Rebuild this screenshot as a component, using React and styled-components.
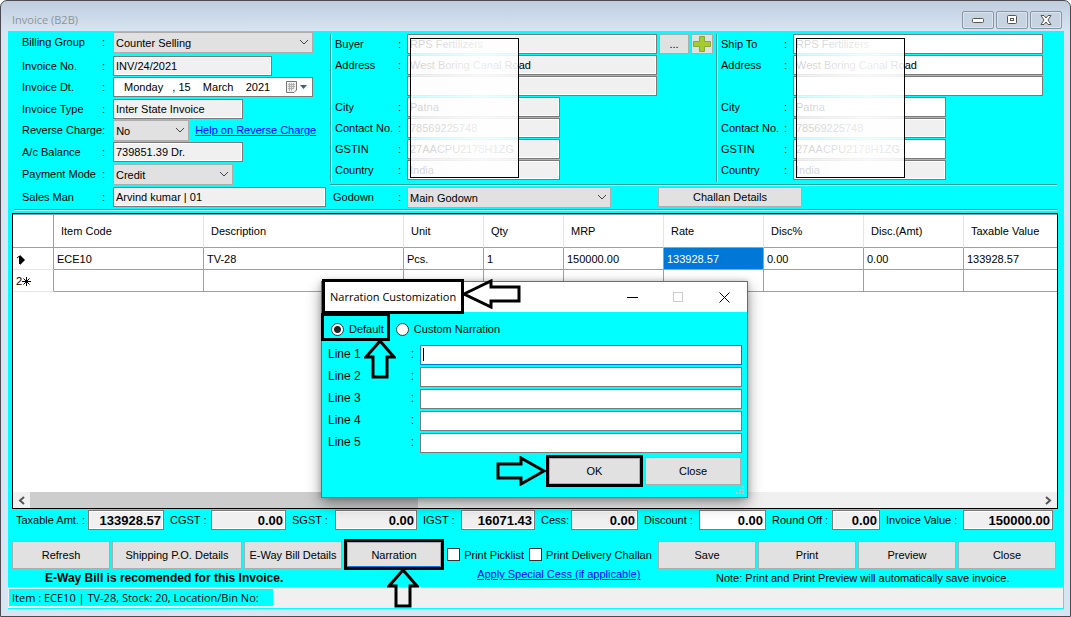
import React from "react";
import styled, { createGlobalStyle, css } from "styled-components";

const Global = createGlobalStyle`
  * { box-sizing: border-box; }
  body { margin: 0; font: 11px/14px "Liberation Sans", Arial, sans-serif; color: #000; }
  button, input, select { font: inherit; color: inherit; margin: 0; border-radius: 0; }
`;

const uiFont = css`font-family: "Open Sans", "Noto Sans", sans-serif;`;

/* ---------- main window ---------- */

const Window = styled.div`
  position: relative;
  display: flex;
  flex-direction: column;
  min-height: 100vh;
  min-width: 1040px;
  padding: 0 6px 7px 7px;
  border: 1px solid #4a4a52;
  border-radius: 7px 7px 0 0;
  background: linear-gradient(#c0cddc, #d7e4f2 30px);
  overflow: hidden;
`;

const TitleBar = styled.header`
  display: flex;
  align-items: center;
  height: 30px;
  padding: 7px 2px 0 4px;
`;

const WindowTitle = styled.h1`
  flex: 1;
  margin: 0;
  font-size: 11px;
  font-weight: 400;
  color: #8d949c;
  ${uiFont}
`;

const CaptionButton = styled.button`
  display: grid;
  place-items: center;
  width: 32px;
  height: 18px;
  margin-left: 2px;
  padding: 0;
  border: 1px solid #8a94a4;
  border-radius: 2px;
  background: #c6d3e1;
  box-shadow: inset 0 0 0 1px #dbe5f0;
`;

const Body = styled.main`
  display: flex;
  flex: 1;
  flex-direction: column;
  background: #0ff;
`;

/* ---------- form ---------- */

const Form = styled.form`
  display: flex;
  padding-top: 1px;
`;

const HeaderFields = styled.section`
  width: 322px;
  padding-left: 14px;
`;

const RightSide = styled.div`
  flex: 1;
  padding-right: 7px;
`;

const Parties = styled.div`
  display: flex;
  height: 153px;
  padding: 2px 0;
  border-bottom: 1px solid #3a9ea0;
  box-shadow: 0 1px #b8ffff;
`;

const Party = styled.section`
  position: relative;
  flex: ${(p) => (p.$grow ? "1" : "0 0 386px")};
  padding-left: 4px;
  border-left: 1px solid #3a9ea0;
  box-shadow: inset 1px 0 #b8ffff;
`;

const Row = styled.div`
  display: flex;
  gap: 2px;
  height: ${(p) => p.$h || 21}px;
`;

const Caption = styled.label`
  display: flex;
  flex: 0 0 ${(p) => p.$w || 74}px;
  justify-content: space-between;
  align-self: flex-start;
  padding: 3px ${(p) => p.$gap || 6}px 0 0;
  white-space: nowrap;
`;

const TextBox = styled.input`
  width: ${(p) => (p.$w ? p.$w + "px" : "100%")};
  height: 20px;
  padding: 0 2px;
  border: 1px solid #7a7a7a;
  outline: 0;
  background: ${(p) => (p.$white ? "#fff" : "#f0f0f0")};
  box-shadow: inset 0 0 0 1px #fff;
`;

const SelectBox = styled.span`
  position: relative;
  flex: 0 0 ${(p) => p.$w}px;
  height: 21px;
  select {
    appearance: none;
    width: 100%;
    height: 21px;
    padding: 0 20px 0 2px;
    border: 1px solid #adadad;
    background: #e1e1e1;
  }
  svg { position: absolute; right: 4px; top: 7px; pointer-events: none; }
`;

const DateBox = styled.span`
  display: flex;
  align-items: center;
  width: 200px;
  height: 20px;
  border: 1px solid #7a7a7a;
  background: #fff;
  input { flex: 1; min-width: 0; padding: 0 0 0 10px; border: 0; outline: 0; background: none; }
  button { display: flex; align-items: center; gap: 2px; padding: 0 4px 0 0; border: 0; background: none; }
`;

const Link = styled.a`
  color: #00f;
  text-decoration: underline;
  white-space: nowrap;
`;

const HelpLink = styled(Link)`
  padding: 3px 0 0 4px;
`;

const Redaction = styled.div`
  position: absolute;
  left: 79px;
  top: 4px;
  width: 109px;
  height: 140px;
  border: 1px solid #000;
  background:
    linear-gradient(90deg, transparent 5%, rgba(255, 255, 255, 0.6) 65%, rgba(255, 255, 255, 0.3)),
    rgba(255, 255, 255, 0.82);
`;

const Button = styled.button`
  width: ${(p) => (p.$w ? p.$w + "px" : "auto")};
  height: ${(p) => p.$h || 28}px;
  padding: 0;
  border: 1px solid #adadad;
  background: #e1e1e1;
  white-space: nowrap;
`;

const IconButton = styled(Button)`
  display: grid;
  place-items: center;
`;

const GodownRow = styled.div`
  display: flex;
  padding: 2px 0 0 3px;
`;

const ChallanButton = styled(Button)`
  margin-left: 47px;
`;

const Divider = styled.hr`
  margin: 0 7px 2px 6px;
  border: 0;
  border-top: 1px solid #3a9ea0;
  border-bottom: 1px solid #b8ffff;
`;

/* ---------- item grid ---------- */

const GridFrame = styled.section`
  display: flex;
  flex: 1;
  flex-direction: column;
  margin: 0 6px 0 4px;
  border: 1px solid #000;
  background: #fff;
  overflow: hidden;
`;

const TableArea = styled.div`
  flex: 1;
  border-top: 1px solid #a0a0a0;
  overflow: hidden;
`;

const Table = styled.table`
  width: 1051px;
  min-width: 100%;
  table-layout: fixed;
  border-collapse: separate;
  border-spacing: 0;
  th, td {
    height: 22px;
    padding: 0 3px;
    border-right: 1px solid #a0a0a0;
    border-bottom: 1px solid #a0a0a0;
    font-weight: 400;
    text-align: left;
    white-space: nowrap;
  }
  thead th { height: 33px; padding-left: 7px; border-right-color: #e5e5e5; }
  tr > th:first-child { border-right-color: #a0a0a0; }
  tbody th { border-bottom-color: #e5e5e5; }
  svg { vertical-align: middle; }
`;

const Selected = styled.td`
  background: #0078d7;
  color: #fff;
`;

const ScrollBar = styled.div`
  display: flex;
  align-items: center;
  height: 16px;
  background: #f0f0f0;
`;

const ScrollButton = styled.button`
  display: grid;
  place-items: center;
  width: 17px;
  height: 16px;
  padding: 0;
  border: 0;
  background: none;
`;

const ScrollTrack = styled.div`
  display: grid;
  flex: 1;
  grid-template-columns: 5fr 8fr;
  height: 16px;
  &::before { content: ""; background: #cdcdcd; }
`;

/* ---------- totals, actions, status ---------- */

const Totals = styled.section`
  display: grid;
  grid-template-columns:
    78px 76fr 47px 75fr 49px 82fr 44px 74fr 36px 67fr 61px 67fr 66px 48fr 83px 90fr;
  align-items: center;
  padding: 1px 11px 9px 2px;
  label { padding-left: 6px; white-space: nowrap; }
  input { padding: 0 2px; font-size: 13px; font-weight: 700; text-align: right; }
`;

const Actions = styled.section`
  display: flex;
  justify-content: space-between;
  padding: 0 8px 0 4px;
`;

const ActionGroup = styled.div`
  display: flex;
  flex-direction: column;
`;

const ButtonRow = styled.div`
  display: flex;
  align-items: center;
  gap: 2px;
  height: 31px;
`;

const Marked = styled.div`
  position: relative;
  border: 3px solid #000;
  button { display: block; }
`;

const FocusedButton = styled(Button)`
  border-bottom-color: #0078d7;
`;

const Check = styled.label`
  display: flex;
  align-items: center;
  gap: 4px;
  padding-right: 3px;
  white-space: nowrap;
  input { appearance: none; width: 13px; height: 13px; border: 1px solid #333; background: #fff; }
`;

const Notice = styled.p`
  margin: 0;
  padding-left: ${(p) => p.$indent}px;
  line-height: 17px;
  white-space: nowrap;
`;

const StrongNotice = styled(Notice)`
  font-size: 12px;
  font-weight: 700;
`;

const CessLink = styled(Link)`
  padding-left: 30px;
  line-height: 9px;
`;

const StatusBar = styled.footer`
  height: 22px;
  padding: 2px 0 0 1px;
  border: solid #0ff;
  border-width: 0 1px 1px 0;
  background: #f0f0f0;
  box-shadow: inset 0 1px #d7d7d7;
`;

const StatusText = styled.span`
  display: inline-block;
  min-width: 264px;
  padding: 0 7px 0 3px;
  line-height: 17px;
  background: #0ff;
  white-space: nowrap;
  ${uiFont}
`;

/* ---------- narration dialog ---------- */

const Dialog = styled.section`
  position: absolute;
  left: 320px;
  top: 280px;
  width: 427px;
  border: 1px solid #6b6b6b;
  background: #0ff;
  box-shadow: 0 6px 14px rgba(0, 0, 0, 0.4), 0 0 5px rgba(0, 0, 0, 0.2);
`;

const DialogTitle = styled.header`
  display: flex;
  align-items: center;
  height: 30px;
  padding-left: 8px;
  background: #fff;
  h2 { flex: 1; margin: 0; font-size: 11px; font-weight: 400; ${uiFont} }
  button { display: grid; place-items: center; width: 46px; height: 30px; padding: 0; border: 0; background: none; }
`;

const Choices = styled.div`
  display: flex;
  gap: 12px;
  padding: 10px 0 9px 9px;
  label { display: flex; align-items: center; gap: 5px; }
  input {
    appearance: none;
    width: 13px;
    height: 13px;
    border: 1px solid #333;
    border-radius: 50%;
    background: #fff;
  }
  input:checked { background: radial-gradient(#222 0 3px, #fff 4px); }
`;

const LineRow = styled.div`
  display: flex;
  height: 22px;
  padding: 0 5px 0 6px;
  font-size: 12px;
  label { display: flex; flex: 0 0 92px; justify-content: space-between; padding: 2px 6px 0 0; }
  input { background: #fff; }
  input:focus {
    border-color: #0078d7;
    caret-color: transparent;
    background: linear-gradient(#000, #000) 2px 2px / 1px 13px no-repeat #fff;
  }
`;

const DialogButtons = styled.div`
  display: flex;
  justify-content: flex-end;
  align-items: center;
  gap: 2px;
  padding: 0 6px 10px 0;
`;

const OutlineBox = styled.span`
  position: absolute;
  left: ${(p) => p.$x}px;
  top: ${(p) => p.$y}px;
  width: ${(p) => p.$w}px;
  height: ${(p) => p.$h}px;
  border: 3px solid #000;
  pointer-events: none;
`;

const Pointer = styled.svg`
  position: absolute;
  left: ${(p) => p.$x}px;
  top: ${(p) => p.$y}px;
  fill: none;
  stroke: #000;
  stroke-width: 3;
  pointer-events: none;
`;

const Grip = styled.svg`
  position: absolute;
  right: 2px;
  bottom: 2px;
  fill: #b8c4c4;
`;

const POINTERS = {
  left: { w: 60, h: 30, d: "M2 15 L29 2 V8 H57 V22 H29 V28 Z" },
  right: { w: 50, h: 30, d: "M48 15 L25 2 V8 H2 V22 H25 V28 Z" },
  up: { w: 32, h: 40, d: "M16 2 L30 18 H23 V38 H9 V18 H2 Z" },
};

function Arrow({ dir, x, y }) {
  const a = POINTERS[dir];
  return (
    <Pointer $x={x} $y={y} width={a.w} height={a.h} viewBox={`0 0 ${a.w} ${a.h}`} aria-hidden="true">
      <path d={a.d} />
    </Pointer>
  );
}

function Select({ id, w, value }) {
  return (
    <SelectBox $w={w}>
      <select id={id} defaultValue={value}>
        <option>{value}</option>
      </select>
      <svg width="10" height="7" viewBox="0 0 10 7" fill="none" stroke="#444">
        <path d="M1 1 L5 5 L9 1" />
      </svg>
    </SelectBox>
  );
}

function Field({ id, label, w = 89, h = 22, gap, children }) {
  return (
    <Row $h={h}>
      <Caption htmlFor={id} $w={w} $gap={gap}>
        <span>{label}</span>
        {label && <span>:</span>}
      </Caption>
      {children}
    </Row>
  );
}

function PartyPanel({ id, title, editable, grow, children }) {
  const rows = [
    [title, "RPS Fertilizers", 250, editable],
    ["Address", "West Boring Canal Road", 250, editable],
    ["", "", 250, editable],
    ["City", "Patna", 153, editable],
    ["Contact No.", "78569225748", 153, false],
    ["GSTIN", "27AACPU2178H1ZG", 153, editable],
    ["Country", "India", 153, false],
  ];
  return (
    <Party $grow={grow}>
      {rows.map(([label, value, w, white], i) => (
        <Field key={i} id={`${id}-${i}`} label={label} w={70} h={21} gap={4}>
          <TextBox
            id={`${id}-${i}`}
            aria-label={label || "Address line 2"}
            defaultValue={value}
            $w={w}
            $white={white}
            readOnly={!white}
          />
          {i === 0 && children}
        </Field>
      ))}
      <Redaction />
    </Party>
  );
}

const COLUMNS = [
  ["Item Code", 150], ["Description", 200], ["Unit", 80], ["Qty", 80], ["MRP", 100],
  ["Rate", 100], ["Disc%", 100], ["Disc.(Amt)", 100], ["Taxable Value", 100],
];
const ITEM = ["ECE10", "TV-28", "Pcs.", "1", "150000.00", "133928.57", "0.00", "0.00", "133928.57"];

const TOTALS = [
  ["Taxable Amt. :", "133928.57"], ["CGST :", "0.00"], ["SGST :", "0.00"], ["IGST :", "16071.43"],
  ["Cess:", "0.00"], ["Discount :", "0.00", true], ["Round Off :", "0.00"], ["Invoice Value :", "150000.00"],
];

function ItemGrid() {
  return (
    <GridFrame>
      <TableArea>
        <Table>
          <colgroup>
            <col style={{ width: 41 }} />
            {COLUMNS.map(([name, w]) => <col key={name} style={{ width: w }} />)}
          </colgroup>
          <thead>
            <tr>
              <th />
              {COLUMNS.map(([name]) => <th key={name} scope="col">{name}</th>)}
            </tr>
          </thead>
          <tbody>
            <tr>
              <th scope="row">
                <svg width="14" height="12" viewBox="0 0 14 12" role="img" aria-label="Current row">
                  <path d="M1 4 L3.500 2 V10" fill="none" stroke="#000" />
                  <path d="M4 1 L9 6 L4 11 Z" />
                </svg>
              </th>
              {ITEM.map((v, i) => (i === 5 ? <Selected key={i}>{v}</Selected> : <td key={i}>{v}</td>))}
            </tr>
            <tr>
              <th scope="row">
                2
                <svg width="9" height="9" viewBox="0 0 9 9" stroke="#000" aria-hidden="true">
                  <path d="M4.5 0 V9 M0 4.5 H9 M1.5 1.5 L7.5 7.5 M7.5 1.5 L1.5 7.5" />
                </svg>
              </th>
              {ITEM.map((_, i) => <td key={i} />)}
            </tr>
          </tbody>
        </Table>
      </TableArea>
      <ScrollBar>
        <ScrollButton aria-label="Scroll left">
          <svg width="7" height="9" viewBox="0 0 7 9" fill="none" stroke="#555" strokeWidth="2"><path d="M6 1 L2 4.5 L6 8" /></svg>
        </ScrollButton>
        <ScrollTrack />
        <ScrollButton aria-label="Scroll right">
          <svg width="7" height="9" viewBox="0 0 7 9" fill="none" stroke="#555" strokeWidth="2"><path d="M1 1 L5 4.5 L1 8" /></svg>
        </ScrollButton>
      </ScrollBar>
    </GridFrame>
  );
}

function NarrationDialog() {
  return (
    <Dialog role="dialog" aria-labelledby="narration-title">
      <DialogTitle>
        <h2 id="narration-title">Narration Customization</h2>
        <button aria-label="Minimize"><svg width="11" height="11" stroke="#000"><path d="M0 5.5 H11" /></svg></button>
        <button aria-label="Maximize"><svg width="11" height="11" fill="none" stroke="#ccc"><rect x=".5" y=".5" width="9" height="9" /></svg></button>
        <button aria-label="Close"><svg width="11" height="11" stroke="#000"><path d="M.5 .5 L10.5 10.5 M10.5 .5 L.5 10.5" /></svg></button>
      </DialogTitle>
      <Choices>
        <label><input type="radio" name="narration" defaultChecked />Default</label>
        <label><input type="radio" name="narration" />Custom Narration</label>
      </Choices>
      {[1, 2, 3, 4, 5].map((n) => (
        <LineRow key={n}>
          <label htmlFor={`line-${n}`}><span>Line {n}</span><span>:</span></label>
          <TextBox id={`line-${n}`} autoFocus={n === 1} />
        </LineRow>
      ))}
      <DialogButtons>
        <Marked><Button $w={91} $h={26}>OK</Button></Marked>
        <Button $w={96}>Close</Button>
      </DialogButtons>
      <Grip width="9" height="9" aria-hidden="true">
        <path d="M6 0h2v2h-2z M3 3h2v2h-2z M6 3h2v2h-2z M0 6h2v2h-2z M3 6h2v2h-2z M6 6h2v2h-2z" />
      </Grip>
      <OutlineBox $x={0} $y={-3} $w={142} $h={35} />
      <OutlineBox $x={-1} $y={31} $w={69} $h={28} />
      <Arrow dir="left" x={140} y={-3} />
      <Arrow dir="up" x={42} y={57} />
      <Arrow dir="right" x={174} y={174} />
    </Dialog>
  );
}

export default function App() {
  return (
    <>
      <Global />
      <Window>
        <TitleBar>
          <WindowTitle>Invoice (B2B)</WindowTitle>
          <CaptionButton aria-label="Minimize">
            <svg width="12" height="6" fill="#fff" stroke="#555"><rect x=".5" y="1.5" width="11" height="4" rx="1" /></svg>
          </CaptionButton>
          <CaptionButton aria-label="Restore">
            <svg width="12" height="10" fill="#fff" stroke="#555"><rect x="1.5" y=".5" width="9" height="8" rx="1" /><rect x="4.5" y="3.5" width="3" height="2" /></svg>
          </CaptionButton>
          <CaptionButton aria-label="Close window">
            <svg width="12" height="10" fill="#fff" stroke="#555"><path d="M1 .5 H4 L6 3 L8 .5 H11 L8 5 L11 9.500 H8 L6 7 L4 9.500 H1 L4 5 Z" /></svg>
          </CaptionButton>
        </TitleBar>
        <Body>
          <Form onSubmit={(e) => e.preventDefault()}>
            <HeaderFields>
              <Field id="group" label="Billing Group" h={24}><Select id="group" w={200} value="Counter Selling" /></Field>
              <Field id="no" label="Invoice No." h={21}><TextBox id="no" $w={159} readOnly defaultValue="INV/24/2021" /></Field>
              <Field id="date" label="Invoice Dt.">
                <DateBox>
                  <input id="date" defaultValue={"Monday   , 15    March    2021"} />
                  <button aria-label="Open calendar">
                    <svg width="22" height="13" viewBox="0 0 22 13">
                      <path d="M.500 .500 H10.500 V9 L8 11.500 H.500 Z" fill="#f2f2f2" stroke="#777" />
                      <path d="M2 3.500 H9 M2 5.500 H9 M2 7.500 H8 M3.500 2 V10 M5.500 2 V10 M7.500 2 V8" stroke="#b0b0b0" />
                      <path d="M14 4 H21 L17.500 8 Z" fill="#3f5f7f" />
                    </svg>
                  </button>
                </DateBox>
              </Field>
              <Field id="type" label="Invoice Type" h={21}><TextBox id="type" $w={130} readOnly defaultValue="Inter State Invoice" /></Field>
              <Field id="reverse" label="Reverse Charge">
                <Select id="reverse" w={76} value="No" />
                <HelpLink href="#help">Help on Reverse Charge</HelpLink>
              </Field>
              <Field id="balance" label="A/c Balance"><TextBox id="balance" $w={130} readOnly defaultValue="739851.39 Dr." /></Field>
              <Field id="payment" label="Payment Mode" h={23}><Select id="payment" w={120} value="Credit" /></Field>
              <Field id="sales" label="Sales Man"><TextBox id="sales" $w={213} readOnly defaultValue="Arvind kumar | 01" /></Field>
            </HeaderFields>
            <RightSide>
              <Parties>
                <PartyPanel id="buyer" title="Buyer">
                  <Button $w={30} $h={20}>...</Button>
                  <IconButton $w={22} $h={20} aria-label="Add buyer">
                    <svg width="18" height="16" viewBox="0 0 18 16"><path d="M6.500 .5 H11.500 V5.500 H17.500 V10.500 H11.500 V15.500 H6.500 V10.500 H.5 V5.500 H6.500 Z" fill="#a4cc2c" stroke="#86a83a" /></svg>
                  </IconButton>
                </PartyPanel>
                <PartyPanel id="ship" title="Ship To" editable grow />
              </Parties>
              <GodownRow>
                <Field id="godown" label="Godown" w={72} h={21} gap={4}><Select id="godown" w={204} value="Main Godown" /></Field>
                <ChallanButton $w={144} $h={20}>Challan Details</ChallanButton>
              </GodownRow>
            </RightSide>
          </Form>
          <Divider />
          <ItemGrid />
          <Totals>
            {TOTALS.map(([label, value, white]) => (
              <React.Fragment key={label}>
                <label htmlFor={label}>{label}</label>
                <TextBox id={label} defaultValue={value} $white={white} readOnly={!white} />
              </React.Fragment>
            ))}
          </Totals>
          <Actions>
            <ActionGroup>
              <ButtonRow>
                <Button $w={98}>Refresh</Button>
                <Button $w={130}>Shipping P.O. Details</Button>
                <Button $w={98}>E-Way Bill Details</Button>
                <Marked>
                  <FocusedButton $w={94} $h={25}>Narration</FocusedButton>
                  <Arrow dir="up" x={40} y={26} />
                </Marked>
              </ButtonRow>
              <StrongNotice $indent={33}>E-Way Bill is recomended for this Invoice.</StrongNotice>
            </ActionGroup>
            <ActionGroup>
              <ButtonRow>
                <Check><input type="checkbox" />Print Picklist</Check>
                <Check><input type="checkbox" />Print Delivery Challan</Check>
              </ButtonRow>
              <CessLink href="#cess">Apply Special Cess (if applicable)</CessLink>
            </ActionGroup>
            <ActionGroup>
              <ButtonRow>
                {["Save", "Print", "Preview", "Close"].map((t) => <Button key={t} $w={98}>{t}</Button>)}
              </ButtonRow>
              <Notice $indent={58}>Note: Print and Print Preview will automatically save invoice.</Notice>
            </ActionGroup>
          </Actions>
          <StatusBar>
            <StatusText>Item : ECE10 | TV-28, Stock: 20, Location/Bin No:</StatusText>
          </StatusBar>
        </Body>
        <NarrationDialog />
      </Window>
    </>
  );
}
